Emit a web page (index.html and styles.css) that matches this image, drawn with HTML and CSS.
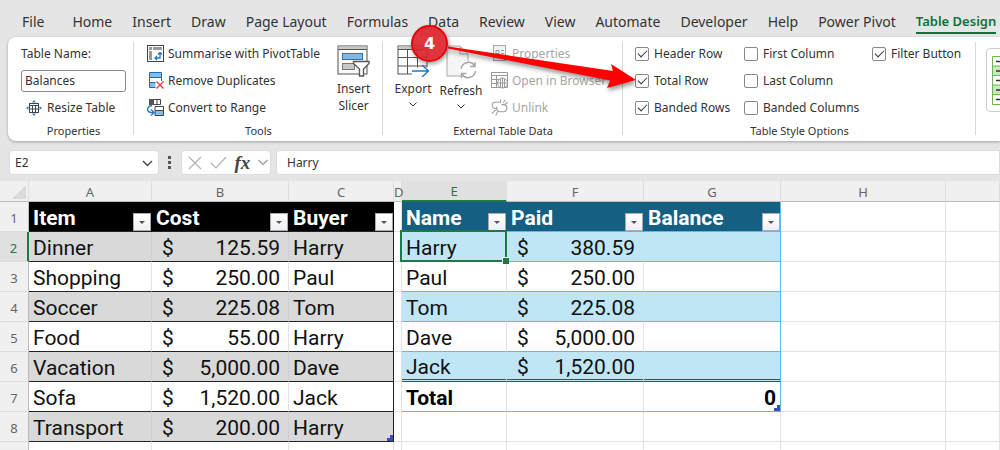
FILE: index.html
```html
<!DOCTYPE html>
<html lang="en">
<head>
  <meta charset="UTF-8" />
  <meta name="viewport" content="width=device-width, initial-scale=1" />
  <title>Balances</title>
  <link rel="stylesheet" href="styles.css">
</head>
<body>

  <!-- Ribbon tabs -->
  <nav class="tabs">
    <a href="#" class="file">File</a>
    <a href="#">Home</a>
    <a href="#">Insert</a>
    <a href="#">Draw</a>
    <a href="#">Page Layout</a>
    <a href="#">Formulas</a>
    <a href="#">Data</a>
    <a href="#">Review</a>
    <a href="#">View</a>
    <a href="#">Automate</a>
    <a href="#">Developer</a>
    <a href="#">Help</a>
    <a href="#">Power Pivot</a>
    <a href="#" class="active">Table Design</a>
  </nav>

  <!-- Ribbon -->
  <div class="ribbon">
    <section class="group properties">
      <div class="stack">
        <label class="row" for="tableName">Table Name:</label>
        <div class="row"><input type="text" id="tableName" value="Balances"></div>
        <button class="row tool resize">
          <svg width="16" height="16" viewBox="0 0 16 16" fill="none">
            <rect x="3.5" y="3.5" width="9" height="9" fill="#fff" stroke="#444"/>
            <path d="M3.5 5.5h9M3.5 9h9M6.5 5v7.500M9.500 5v7.500" stroke="#444"/>
            <path d="M8 0l2 2.500H6zM8 16l2-2.500H6zM0 8l2.500-2v4zM16 8l-2.500-2v4z" fill="#2b88d0"/>
          </svg>
          Resize Table
        </button>
      </div>
      <h2>Properties</h2>
    </section>

    <section class="group tools">
      <div class="body">
        <div class="stack">
          <button class="row tool">
            <svg width="17" height="17" viewBox="0 0 17 17" fill="none">
              <rect x=".5" y=".5" width="16" height="16" fill="#fff" stroke="#444"/>
              <path d="M2 2h3v3H2zM6 2h9v3H6zM2 6h3v9H2z" fill="#999"/>
              <path d="M8 13h5V8M10 11l-2 2 2 2M11 9.500l2-2 2 2" stroke="#1e78c8" stroke-width="1.300"/>
            </svg>
            Summarise with PivotTable
          </button>
          <button class="row tool">
            <svg width="17" height="17" viewBox="0 0 17 17" fill="none">
              <path d="M2.500 .500h12v5h-12zM2.500 5.500h12v5h-12zM2.500 10.500h7v5h-7z" fill="#83bdec" stroke="#1b6cb0"/>
              <path d="M3 6h11v4H3z" fill="#fff"/>
              <path d="M8.500 9h8v8h-8z" fill="#fff"/>
              <path d="M9.500 9.500l7 7M16.500 9.500l-7 7" stroke="#e8383f" stroke-width="1.300"/>
            </svg>
            Remove Duplicates
          </button>
          <button class="row tool">
            <svg width="17" height="17" viewBox="0 0 17 17" fill="none">
              <path d="M2.500 .500h11v5h-11z" fill="#fff" stroke="#444"/>
              <path d="M2 0h5v6H2z" fill="#555"/>
              <path d="M10 .500v5" stroke="#444"/>
              <path d="M8 7.500h8.500v4H8z" fill="#fff" stroke="#444"/>
              <path d="M8 11.500h8.500v5H8z" fill="#83bdec" stroke="#444"/>
              <path d="M5 6.500C1 7-.500 10 1.500 12.500c1 1.200 3 1.200 5 1M4 10.500l3 3-3 3" stroke="#1e78c8" stroke-width="1.400"/>
            </svg>
            Convert to Range
          </button>
        </div>
        <button class="big">
          <svg width="33" height="32" viewBox="0 0 33 32" fill="none">
            <rect x="1" y="1" width="29" height="28" fill="#fafafa" stroke="#555"/>
            <path d="M1.500 1.500h28v3h-28z" fill="#c8c8c8"/>
            <path d="M1 4.500h29" stroke="#555"/>
            <rect x="5.500" y="8.500" width="20" height="6" fill="#7db9ea" stroke="#1e78c8"/>
            <rect x="5.500" y="18.500" width="12" height="6" fill="#c8c8c8" stroke="#777"/>
            <path d="M16.500 16.500h15.500v2l-5.500 5.500v7h-4v-7l-6-5.500z" fill="#fff" stroke="#555" stroke-width="1.300"/>
          </svg>
          <span>Insert<br>Slicer</span>
        </button>
      </div>
      <h2>Tools</h2>
    </section>

    <section class="group external">
      <div class="body">
        <button class="big">
          <svg width="33" height="32" viewBox="0 0 33 32" fill="none">
            <rect x="1" y="1" width="29" height="28" fill="#fff" stroke="#555"/>
            <path d="M1.500 1.500h28v3h-28z" fill="#c8c8c8"/>
            <path d="M1 4.500h29M1 12.500h29M1 21h29M10.500 5v24M20.500 5v24" stroke="#555"/>
            <path d="M15 22.500h17v8H15z" fill="#fff"/>
            <path d="M15 26h16M25 20l6.500 6-6.500 6" stroke="#1e78c8" stroke-width="1.400"/>
          </svg>
          <span>Export</span>
          <svg class="chev" width="8" height="5" viewBox="0 0 8 5"><path d="M.5 .5L4 4 7.500 .5"/></svg>
        </button>
        <button class="big">
          <svg width="31" height="34" viewBox="0 0 31 34" fill="none">
            <path d="M1 1h13l8 8v22H1z" fill="#f5f5f5" stroke="#aaa"/>
            <path d="M14 1v8h8" stroke="#aaa"/>
            <circle cx="22" cy="25" r="9" fill="#fff"/>
            <path d="M15 24a7.500 7.500 0 0 1 13.500-3.500M29 17v4.500h-5M29.500 26a7.500 7.500 0 0 1-13.500 3.500M15.500 33v-4.500h5" stroke="#a5a5a5" stroke-width="1.500"/>
          </svg>
          <span>Refresh</span>
          <svg class="chev" width="8" height="5" viewBox="0 0 8 5"><path d="M.5 .5L4 4 7.500 .5"/></svg>
        </button>
        <div class="stack">
          <button class="row tool" disabled>
            <svg width="17" height="17" viewBox="0 0 17 17" fill="none" stroke="#aaa">
              <rect x="2.500" y=".5" width="12" height="15" fill="#f2f2f2"/>
              <path d="M5 5.500h3v3H5zM10 5.500h3M10 8.500h3" stroke="#999"/>
            </svg>
            Properties
          </button>
          <button class="row tool" disabled>
            <svg width="17" height="17" viewBox="0 0 17 17" fill="none" stroke="#999">
              <path d="M.5 .5h16v15H.5zM.5 3.500h16M.5 7.500h8M.5 11.500h8M5.500 3v12"/>
              <circle cx="11.500" cy="11" r="5" fill="#fff"/>
              <path d="M6.500 11h10M11.500 6v10M9.500 7v8M13.500 7v8"/>
            </svg>
            Open in Browser
          </button>
          <button class="row tool" disabled>
            <svg width="17" height="17" viewBox="0 0 18 17" fill="none" stroke="#a0a0a0" stroke-width="1.200">
              <path d="M7 9.500H4.500a3.200 3.200 0 0 1 0-6.500H9M11 5.500h2a3.500 3.500 0 0 1 0 7.500H9.500a3.500 3.500 0 0 1-3-5.500M10 4V0M13 3.500L15 .5M15 5l2.500-2M5 11l-4 4M7 13l-2 4"/>
            </svg>
            Unlink
          </button>
        </div>
      </div>
      <h2>External Table Data</h2>
    </section>

    <section class="group options">
      <div class="checks">
        <label><input type="checkbox" checked>Header Row</label>
        <label><input type="checkbox">First Column</label>
        <label><input type="checkbox" checked>Filter Button</label>
        <label><input type="checkbox" checked>Total Row</label>
        <label><input type="checkbox">Last Column</label>
        <span></span>
        <label><input type="checkbox" checked>Banded Rows</label>
        <label><input type="checkbox">Banded Columns</label>
      </div>
      <h2>Table Style Options</h2>
    </section>

    <section class="group styles">
      <button class="gallery" aria-label="Table style">
        <svg width="60" height="49" viewBox="0 0 60 49" fill="none">
          <path d="M.5 .5h59v48H.5z" fill="#fff"/>
          <path d="M1 10h58v10H1zM1 29h58v10H1z" fill="#c9e8bb"/>
          <path d="M.5 .5h59v48H.5zM.5 10h59M.5 19.500h59M.5 29h59M.5 38.500h59" stroke="#6cb84f"/>
          <path d="M4 5.500h9M4 15h9M4 24.500h9M4 34h9M4 43.500h9" stroke="#333" stroke-width="1.500"/>
        </svg>
      </button>
    </section>
  </div>

  <!-- Formula bar -->
  <div class="formula-bar">
    <div class="box name-box">
      <input type="text" value="E2" aria-label="Name box">
      <button aria-label="Open names">
        <svg width="11" height="7" viewBox="0 0 11 7" fill="none"><path d="M1 1l4.500 4.500L10 1" stroke="#444" stroke-width="1.400"/></svg>
      </button>
    </div>
    <svg class="dots" width="3" height="13" viewBox="0 0 3 13"><path d="M0 0h3v3H0zM0 5h3v3H0zM0 10h3v3H0z" fill="#555"/></svg>
    <div class="box actions">
      <button aria-label="Cancel"><svg width="14" height="14" viewBox="0 0 14 14" fill="none"><path d="M1 1l12 12M13 1L1 13" stroke="#b0b0b0" stroke-width="1.200"/></svg></button>
      <button aria-label="Enter"><svg width="17" height="13" viewBox="0 0 17 13" fill="none"><path d="M1 7l5 5L16 1" stroke="#b0b0b0" stroke-width="1.200"/></svg></button>
      <button class="fx">fx</button>
      <button aria-label="More functions"><svg width="10" height="7" viewBox="0 0 10 7" fill="none"><path d="M.5 1L5 5.500 9.500 1" stroke="#999" stroke-width="1.200"/></svg></button>
    </div>
    <input class="box formula" type="text" value="Harry" aria-label="Formula">
  </div>

  <!-- Sheet -->
  <main>
  <table class="sheet">
    <colgroup>
      <col class="w-num"><col class="w-a"><col class="w-b"><col class="w-c"><col class="w-d">
      <col class="w-e"><col class="w-b"><col class="w-b"><col class="w-h"><col>
    </colgroup>
    <thead>
      <tr>
        <th class="corner"><svg width="14" height="14" viewBox="0 0 14 14"><path d="M14 0v14H0z" fill="#dadada"/></svg></th>
        <th>A</th><th>B</th><th>C</th><th>D</th><th class="current">E</th><th>F</th><th>G</th><th>H</th><th></th>
      </tr>
    </thead>
    <tbody>
      <tr>
        <th>1</th>
        <td class="k head"><div>Item<button aria-label="Filter Item"></button></div></td>
        <td class="k head"><div>Cost<button aria-label="Filter Cost"></button></div></td>
        <td class="k head end"><div>Buyer<button aria-label="Filter Buyer"></button></div></td>
        <td class="gap"></td>
        <td class="b head"><div>Name<button aria-label="Filter Name"></button></div></td>
        <td class="b head"><div>Paid<button aria-label="Filter Paid"></button></div></td>
        <td class="b head end"><div>Balance<button aria-label="Filter Balance"></button></div></td>
        <td></td><td></td>
      </tr>
      <tr>
        <th class="current">2</th>
        <td class="k band">Dinner</td><td class="k band"><div class="money"><span>$</span>125.59</div></td><td class="k band end">Harry</td>
        <td class="gap"></td>
        <td class="b band selected">Harry</td><td class="b band"><div class="money"><span>$</span>380.59</div></td><td class="b band end"></td>
        <td></td><td></td>
      </tr>
      <tr>
        <th>3</th>
        <td class="k">Shopping</td><td class="k"><div class="money"><span>$</span>250.00</div></td><td class="k end">Paul</td>
        <td class="gap"></td>
        <td class="b">Paul</td><td class="b"><div class="money"><span>$</span>250.00</div></td><td class="b end"></td>
        <td></td><td></td>
      </tr>
      <tr>
        <th>4</th>
        <td class="k band">Soccer</td><td class="k band"><div class="money"><span>$</span>225.08</div></td><td class="k band end">Tom</td>
        <td class="gap"></td>
        <td class="b band">Tom</td><td class="b band"><div class="money"><span>$</span>225.08</div></td><td class="b band end"></td>
        <td></td><td></td>
      </tr>
      <tr>
        <th>5</th>
        <td class="k">Food</td><td class="k"><div class="money"><span>$</span>55.00</div></td><td class="k end">Harry</td>
        <td class="gap"></td>
        <td class="b">Dave</td><td class="b"><div class="money"><span>$</span>5,000.00</div></td><td class="b end"></td>
        <td></td><td></td>
      </tr>
      <tr>
        <th>6</th>
        <td class="k band">Vacation</td><td class="k band"><div class="money"><span>$</span>5,000.00</div></td><td class="k band end">Dave</td>
        <td class="gap"></td>
        <td class="b band last">Jack</td><td class="b band last"><div class="money"><span>$</span>1,520.00</div></td><td class="b band last end"></td>
        <td></td><td></td>
      </tr>
      <tr>
        <th>7</th>
        <td class="k">Sofa</td><td class="k"><div class="money"><span>$</span>1,520.00</div></td><td class="k end">Jack</td>
        <td class="gap"></td>
        <td class="b total">Total</td><td class="b total"></td><td class="b total end corner-mark">0</td>
        <td></td><td></td>
      </tr>
      <tr>
        <th>8</th>
        <td class="k band">Transport</td><td class="k band"><div class="money"><span>$</span>200.00</div></td><td class="k band end corner-mark">Harry</td>
        <td></td><td></td><td></td><td></td><td></td><td></td>
      </tr>
      <tr>
        <th></th><td></td><td></td><td></td><td></td><td></td><td></td><td></td><td></td><td></td>
      </tr>
    </tbody>
  </table>
  </main>

  <!-- Step marker and arrow, on top of the ribbon -->
  <div class="marker">4</div>
  <svg class="arrow" width="200" height="60" viewBox="0 0 200 60">
    <path d="M4 6.500L169 31l-2-7 25 16-29 8 3-7.500L4 8.500z" fill="#fe0000"/>
  </svg>

</body>
</html>
```
FILE: styles.css
```css
* { box-sizing: border-box; }

body {
  display: flex;
  flex-direction: column;
  margin: 0;
  height: 100vh;
  overflow: hidden;
  background: #e5e5e5;
  color: #333;
  font-family: "Noto Sans", sans-serif;
  font-size: 12px;
}

button, input {
  font: inherit;
  color: inherit;
  margin: 0;
}

button {
  padding: 0;
  border: none;
  background: none;
}

/* Tabs */
.tabs {
  flex: none;
  display: flex;
  gap: 20px;
  height: 37px;
  padding: 8px 0 0 22px;
  font-size: 14px;
  line-height: 27px;
  white-space: nowrap;
}

.tabs a {
  color: #333;
  text-decoration: none;
}

.tabs .file { margin-right: 8px; }

.tabs .active {
  height: 26px;
  color: #0f703b;
  font-size: 13px;
  font-weight: 600;
  border-bottom: 2px solid #0f703b;
}

/* Ribbon */
.ribbon {
  flex: none;
  display: flex;
  height: 104px;
  margin-left: 8px;
  padding-top: 3px;
  background: #fff;
  border-radius: 8px 0 0 8px;
  box-shadow: 0 1px 3px rgba(0, 0, 0, 0.3);
  overflow: hidden;
  white-space: nowrap;
}

.group { flex: none; }

.group:not(:last-child) {
  background: linear-gradient(#d8d8d8, #d8d8d8) right 2px / 1px 93px no-repeat;
}

.properties { width: 126px; padding: 0 8px 0 13px; }
.tools { width: 249px; }
.external { width: 240px; }
.options { width: 353px; }
.styles { flex: 1; padding: 8px 0 0 10px; }

.group h2 {
  margin: 0;
  font-size: 11px;
  font-weight: normal;
  line-height: 20px;
  text-align: center;
}

.body { display: flex; }
.tools .body { padding-left: 13px; }
.external .body { padding-left: 6px; }

.row {
  display: flex;
  align-items: center;
  height: 27px;
}

.tool { gap: 4px; }
.tool:disabled { color: #a6a6a6; }
.resize { padding-left: 5px; gap: 5px; }

.properties input {
  width: 100%;
  height: 22px;
  padding: 0 3px;
  border: 1px solid #888;
  border-radius: 3px;
}

.big {
  display: flex;
  flex-direction: column;
  align-items: center;
  height: 81px;
  padding-top: 5px;
  line-height: 17px;
}

.tools .big { margin-left: 17px; }
.external .big { width: 48px; }
.external .stack { margin-left: 6px; }
.big span { padding-top: 3px; }
.chev { margin-top: 5px; fill: none; stroke: #333; }

.checks {
  display: grid;
  grid-template-columns: 109px 128px 1fr;
  padding-left: 12px;
}

.checks label {
  display: flex;
  align-items: center;
  gap: 5px;
  height: 27px;
}

.checks input {
  appearance: none;
  display: grid;
  place-items: center;
  width: 14px;
  height: 14px;
  border: 1px solid #888;
  border-radius: 2px;
  background: #fff;
}

.checks input:checked::before {
  content: "";
  width: 8px;
  height: 4px;
  margin-bottom: 3px;
  border: solid #333;
  border-width: 0 0 1px 1px;
  transform: rotate(-45deg);
}

.gallery {
  display: block;
  width: 100px;
  height: 64px;
  padding-left: 5px;
  border: 1px solid #ccc;
  border-radius: 4px;
  text-align: left;
}

.gallery svg { display: block; }

/* Formula bar */
.formula-bar {
  flex: none;
  display: flex;
  align-items: center;
  height: 40px;
  padding: 3px 0 0 9px;
}

.box {
  height: 25px;
  background: #fff;
  border: 1px solid #dcdcdc;
  border-radius: 4px;
}

.name-box {
  display: flex;
  align-items: center;
  width: 150px;
  padding: 0 5px;
}

.name-box input {
  flex: 1;
  min-width: 0;
  padding: 0;
  border: none;
  outline: none;
}

.dots { margin: 0 10px 0 9px; }

.actions {
  display: flex;
  align-items: center;
  justify-content: space-between;
  width: 90px;
  padding: 0 2px 0 6px;
}

.actions svg { display: block; }

.fx {
  font: italic bold 19px "Liberation Serif", serif;
  color: #444;
}

.formula {
  flex: 1;
  min-width: 0;
  margin-left: 5px;
  padding: 0 10px;
  border-radius: 4px 0 0 4px;
}

/* Sheet */
main {
  flex: 1;
  min-height: 0;
  overflow: hidden;
  background: #fff;
}

.sheet {
  width: 100%;
  table-layout: fixed;
  border-collapse: separate;
  border-spacing: 0;
  color: #111;
  font-family: Roboto, sans-serif;
  font-size: 21px;
}

.w-num { width: 29px; }
.w-a { width: 123px; }
.w-b { width: 137px; }
.w-c { width: 105px; }
.w-d { width: 8px; }
.w-e { width: 105px; }
.w-h { width: 165px; }

.sheet th {
  padding: 3px 0 0;
  background: #f0f0f0;
  color: #666;
  font-family: "Noto Sans", sans-serif;
  font-size: 13px;
  font-weight: normal;
  border-right: 1px solid #ddd;
  border-bottom: 1px solid #ddd;
}

.sheet thead th {
  height: 21px;
  padding-top: 1px;
  line-height: 18px;
  border-bottom-color: #bbb;
}

.sheet tbody th { border-right-color: #bbb; }

.corner svg { display: block; margin: 0 2px 0 auto; }

.sheet th.current {
  background: #e0e0e0;
  color: #1d7a47;
}

.sheet thead th.current { border-bottom: 2px solid #1d7a47; }
.sheet tbody th.current { border-right: 2px solid #1d7a47; }

.sheet td {
  position: relative;
  height: 30px;
  padding: 3px 4px 0;
  line-height: 26px;
  white-space: nowrap;
  border-right: 1px solid #e2e2e2;
  border-bottom: 1px solid #e2e2e2;
}

/* black table */
.sheet .k { border-bottom-color: #222; }
.k.end { border-right-color: #222; }
.k.band { background: #d9d9d9; border-right-color: #d0d0d0; }
.k.head { background: #000; border-right-color: #000; }
.k.band.end { border-right-color: #222; }

/* blue table */
.sheet .b { border-bottom-color: #5bbbe4; }
.b.band { background: #c0e6f5; border-right-color: #c0e6f5; }
.b.head { background: #156082; border-right-color: #156082; }
.b.end, .b.band.end, .gap { border-right-color: #5bbbe4; }

.sheet .last {
  line-height: 24px;
  border-bottom: 3px double #156082;
}

.sheet .head {
  color: #fff;
  font-weight: bold;
  padding-right: 0;
}

.head div {
  display: flex;
  justify-content: space-between;
  align-items: flex-end;
}

.head button {
  display: grid;
  place-items: center;
  width: 18px;
  height: 18px;
  background: linear-gradient(#fff, #eef0f6);
  border: 1px solid #aaa;
}

.head button::before {
  content: "";
  border: 3px solid transparent;
  border-top-color: #555;
  border-bottom: none;
}

.money {
  display: flex;
  justify-content: space-between;
  padding: 0 4px 0 6px;
}

.total { font-weight: bold; color: #000; }
.total.end { text-align: right; }

.selected::before {
  content: "";
  position: absolute;
  inset: -2px -1px -1px -2px;
  border: 2px solid #1d7a47;
}

.selected::after {
  content: "";
  position: absolute;
  right: -3px;
  bottom: -3px;
  width: 6px;
  height: 6px;
  background: #1d7a47;
  border: solid #fff;
  border-width: 1px 0 0 1px;
  z-index: 1;
}

.corner-mark::after {
  content: "";
  position: absolute;
  right: 0;
  bottom: 0;
  width: 6px;
  height: 6px;
  background: #3b4fb0;
  clip-path: polygon(100% 0, 100% 100%, 0 100%, 0 50%, 50% 50%, 50% 0);
}

/* Step marker */
.marker {
  position: absolute;
  left: 411px;
  top: 25px;
  width: 37px;
  height: 37px;
  border: 2px solid #e8000c;
  border-radius: 50%;
  background: rgba(222, 36, 44, 0.92);
  color: #fff;
  font: bold 16px/33px "DejaVu Sans", sans-serif;
  text-align: center;
  box-shadow: 1px 2px 4px rgba(0, 0, 0, 0.4);
}

.arrow {
  position: absolute;
  left: 444px;
  top: 40px;
  filter: drop-shadow(1px 3px 2px rgba(0, 0, 0, 0.4));
}
```
